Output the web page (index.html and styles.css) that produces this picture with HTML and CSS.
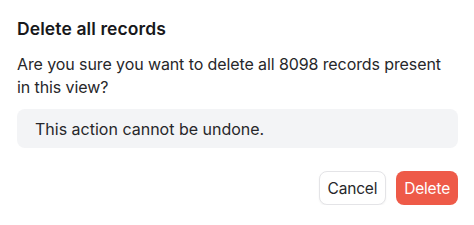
FILE: index.html
```html
<!DOCTYPE html>
<html>
<head>
<meta charset="utf-8">
<link rel="stylesheet" href="styles.css">
</head>
<body>
<div class="dialog">
  <h2 class="title">Delete all records</h2>
  <p class="message">Are you sure you want to delete all 8098 records present in this view?</p>
  <div class="notice">This action cannot be undone.</div>
  <div class="actions">
    <button class="btn btn-cancel">Cancel</button>
    <button class="btn btn-delete">Delete</button>
  </div>
</div>
</body>
</html>
```
FILE: styles.css
```css
* { box-sizing: border-box; }
html, body { margin: 0; padding: 0; background: #fff; }
body { font-family: Inter, "Noto Sans", sans-serif; color: #1f2024; }
.dialog { padding: 17px 16px 0 17px; display: flex; flex-direction: column; }
.title { margin: 0; font-size: 17.5px; font-weight: 600; line-height: 24px; color: #18181b; letter-spacing: 0.1px; }
.message { margin: 12px 0 0; font-size: 16px; line-height: 23px; color: #27272a; letter-spacing: -0.1px; }
.notice { margin-top: 10px; background: #f3f4f6; border-radius: 8px; padding: 0 18px; height: 39px; display: flex; align-items: center; font-size: 16px; color: #27272a; }
.actions { margin-top: 23px; display: flex; justify-content: flex-end; gap: 10px; }
.btn { font-family: inherit; font-size: 15.5px; height: 34px; border-radius: 8px; padding: 0 8px; cursor: pointer; letter-spacing: -0.2px; }
.btn-cancel { background: #fff; border: 1px solid #e4e4e7; color: #27272a; box-shadow: 0 1px 2px rgba(0,0,0,0.05); }
.btn-delete { background: #ee5a48; border: none; color: #fff; }
```
